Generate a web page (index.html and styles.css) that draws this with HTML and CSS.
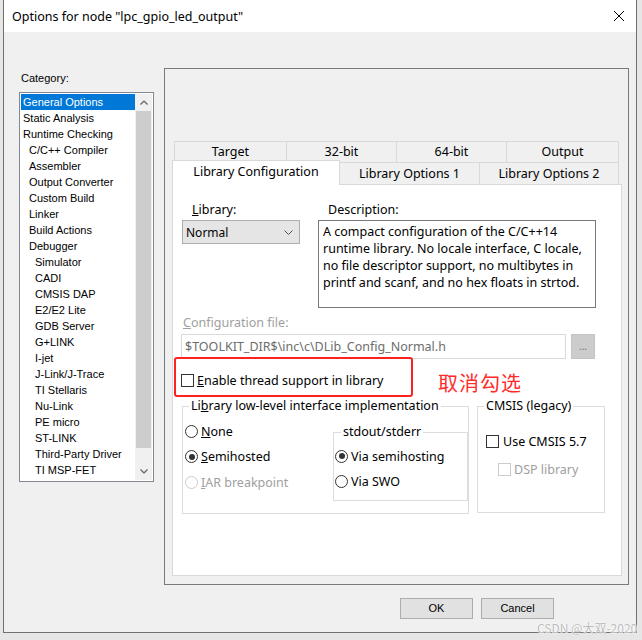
FILE: index.html
```html
<!DOCTYPE html>
<html>
<head>
    <meta charset="UTF-8" />
    <title>Options for node</title>
    <link rel="stylesheet" href="styles.css">
</head>
<body>
<div class="window">
    <div class="titlebar">
        <span class="title">Options for node "lpc_gpio_led_output"</span>
        <svg class="close" width="12" height="12" viewBox="0 0 12 12"><path d="M1 1L11 11M11 1L1 11" stroke="#000" stroke-width="1" fill="none"/></svg>
    </div>

    <div class="main">
        <div class="side">
            <div class="cat-label">Category:</div>
            <div class="listbox">
                <ul class="items">
                    <li class="sel">General Options</li>
                    <li>Static Analysis</li>
                    <li>Runtime Checking</li>
                    <li class="sub">C/C++ Compiler</li>
                    <li class="sub">Assembler</li>
                    <li class="sub">Output Converter</li>
                    <li class="sub">Custom Build</li>
                    <li class="sub">Linker</li>
                    <li class="sub">Build Actions</li>
                    <li class="sub">Debugger</li>
                    <li class="sub2">Simulator</li>
                    <li class="sub2">CADI</li>
                    <li class="sub2">CMSIS DAP</li>
                    <li class="sub2">E2/E2 Lite</li>
                    <li class="sub2">GDB Server</li>
                    <li class="sub2">G+LINK</li>
                    <li class="sub2">I-jet</li>
                    <li class="sub2">J-Link/J-Trace</li>
                    <li class="sub2">TI Stellaris</li>
                    <li class="sub2">Nu-Link</li>
                    <li class="sub2">PE micro</li>
                    <li class="sub2">ST-LINK</li>
                    <li class="sub2">Third-Party Driver</li>
                    <li class="sub2">TI MSP-FET</li>
                </ul>
                <div class="scrollbar">
                    <div class="arrow"><svg width="8" height="5" viewBox="0 0 8 5"><path d="M0.5 4.5L4 1L7.5 4.5" stroke="#606060" stroke-width="1.2" fill="none"/></svg></div>
                    <div class="track"><div class="thumb"></div></div>
                    <div class="arrow"><svg width="8" height="5" viewBox="0 0 8 5"><path d="M0.5 0.5L4 4L7.5 0.5" stroke="#606060" stroke-width="1.2" fill="none"/></svg></div>
                </div>
            </div>
        </div>

        <div class="frame">
            <div class="tabrow back">
                <div class="tab w112">Target</div>
                <div class="tab w110">32-bit</div>
                <div class="tab w110">64-bit</div>
                <div class="tab w113 last">Output</div>
            </div>
            <div class="tabrow front">
                <div class="tab active">Library Configuration</div>
                <div class="tab opt1">Library Options 1</div>
                <div class="tab opt2 last">Library Options 2</div>
            </div>

            <div class="panel">
                <div class="top-row">
                    <div class="lib-col">
                        <div class="label"><u>L</u>ibrary:</div>
                        <div class="select">
                            <span>Normal</span>
                            <svg width="9" height="5" viewBox="0 0 9 5"><path d="M0.5 0.5L4.5 4.5L8.5 0.5" stroke="#555" stroke-width="1" fill="none"/></svg>
                        </div>
                    </div>
                    <div class="desc-col">
                        <div class="label">Description:</div>
                        <div class="desc">A compact configuration of the C/C++14 runtime library. No locale interface, C locale, no file descriptor support, no multibytes in printf and scanf, and no hex floats in strtod.</div>
                    </div>
                </div>

                <div class="cfg-label"><u>C</u>onfiguration file:</div>
                <div class="cfg-row">
                    <div class="cfg-input">$TOOLKIT_DIR$\inc\c\DLib_Config_Normal.h</div>
                    <div class="cfg-btn">...</div>
                </div>

                <div class="check-row">
                    <span class="box"></span>
                    <span><u>E</u>nable thread support in library</span>
                </div>

                <div class="groups">
                    <fieldset class="group g1">
                        <legend>Li<u>b</u>rary low-level interface implementation</legend>
                        <div class="g1-body">
                            <div class="radios">
                                <div class="radio-row"><span class="radio"></span><span><u>N</u>one</span></div>
                                <div class="radio-row"><span class="radio on"></span><span><u>S</u>emihosted</span></div>
                                <div class="radio-row off"><span class="radio"></span><span><u>I</u>AR breakpoint</span></div>
                            </div>
                            <fieldset class="group g-inner">
                                <legend>stdout/stderr</legend>
                                <div class="radio-row"><span class="radio on"></span><span>Via semihosting</span></div>
                                <div class="radio-row"><span class="radio"></span><span>Via SWO</span></div>
                            </fieldset>
                        </div>
                    </fieldset>
                    <fieldset class="group g2">
                        <legend>CMSIS (legacy)</legend>
                        <div class="check-row cmsis"><span class="box"></span><span>Use CMSIS 5.7</span></div>
                        <div class="check-row dsp off"><span class="box"></span><span>DSP library</span></div>
                    </fieldset>
                </div>

                <!-- 标注 -->
                <div class="mark-box"></div>
                <div class="mark-text">取消勾选</div>
            </div>
        </div>
    </div>

    <div class="buttons">
        <div class="btn">OK</div>
        <div class="btn">Cancel</div>
    </div>
</div>
<div class="watermark">CSDN @大双-2020</div>
</body>
</html>
```

FILE: styles.css
```css
* {
    margin: 0;
    padding: 0;
    box-sizing: border-box;
}
body {
    width: 642px;
    height: 640px;
    overflow: hidden;
    position: relative;
    background-color: #e6e6e6;
    font-family: "Noto Sans", "Liberation Sans", sans-serif;
    font-size: 12.5px;
    color: #000;
}
u {
    text-decoration: underline;
    text-underline-offset: 1px;
}

.window {
    width: 634px;
    height: 633px;
    margin-left: 3px;
    background-color: #f0f0f0;
    border: 1px solid #707070;
    border-top: none;
}
.titlebar {
    height: 32px;
    background-color: #fff;
    display: flex;
    align-items: center;
    justify-content: space-between;
    padding: 0 11px 0 8px;
}

.main {
    display: flex;
    padding-top: 36px;
}
.side {
    width: 160px;
    padding-left: 15px;
}
.cat-label {
    font: 11px/14px "Liberation Sans", sans-serif;
    margin: 3px 0 7px 2px;
}
.listbox {
    width: 135px;
    height: 390px;
    border: 1px solid #828790;
    background-color: #fff;
    padding: 1px;
    display: flex;
}
.items {
    list-style: none;
    width: 114px;
    font: 11px/16px "Liberation Sans", sans-serif;
}
.items li {
    height: 16px;
    padding-left: 2px;
    white-space: nowrap;
}
.items li.sub {
    padding-left: 8px;
}
.items li.sub2 {
    padding-left: 14px;
}
.items li.sel {
    background-color: #0078d7;
    color: #fff;
}
.scrollbar {
    width: 17px;
    display: flex;
    flex-direction: column;
    background-color: #f0f0f0;
}
.arrow {
    height: 17px;
    display: flex;
    align-items: center;
    justify-content: center;
}
.track {
    flex: 1;
    padding: 0 1px;
}
.thumb {
    height: 337px;
    background-color: #cdcdcd;
}

/* 右侧大框 */
.frame {
    width: 465px;
    height: 517px;
    border: 1px solid #7a7a7a;
    padding: 72px 0 0 7px;
}
.tabrow {
    display: flex;
}
.tabrow.back {
    margin-left: 2px;
}
.tabrow.front {
    height: 22px;
    align-items: flex-end;
}
.tab {
    height: 21px;
    border: 1px solid #d9d9d9;
    border-right: none;
    border-bottom: none;
    background-color: #f0f0f0;
    text-align: center;
    line-height: 20px;
    white-space: nowrap;
}
.tab.last {
    border-right: 1px solid #d9d9d9;
}
.w112 { width: 112px; }
.w110 { width: 110px; }
.w113 { width: 113px; }
.tabrow.front .tab {
    height: 22px;
    line-height: 21px;
}
.tab.active {
    width: 168px;
    height: 25px !important;
    margin-bottom: -1px;
    border-right: 1px solid #d9d9d9;
    background-color: #fff;
    position: relative;
    z-index: 1;
    line-height: 21px !important;
}
.tab.opt1 {
    width: 139px;
    border-left: none;
}
.tab.opt2 {
    width: 140px;
}

.panel {
    width: 450px;
    height: 392px;
    border: 1px solid #d9d9d9;
    background-color: #fff;
    position: relative;
    padding: 17px 0 0 9px;
}
.top-row {
    display: flex;
}
.lib-col {
    width: 118px;
}
.desc-col {
    width: 278px;
    margin-left: 18px;
}
.label {
    line-height: 16px;
    padding-left: 10px;
    margin-bottom: 2px;
}
.select {
    height: 24px;
    border: 1px solid #adadad;
    background-color: #e5e5e5;
    display: flex;
    align-items: center;
    justify-content: space-between;
    padding: 0 6px 0 3px;
    font-size: 12px;
}
.desc {
    height: 88px;
    border: 1px solid #7a7a7a;
    padding: 2px 4px;
    line-height: 17px;
}

.cfg-label {
    color: #a0a0a0;
    line-height: 16px;
    margin: 7px 0 3px 1px;
}
.cfg-row {
    display: flex;
    gap: 5px;
    margin-left: -1px;
}
.cfg-input {
    width: 385px;
    height: 25px;
    border: 1px solid #d9d9d9;
    background-color: #fff;
    color: #6d6d6d;
    padding-left: 3px;
    line-height: 23px;
}
.cfg-btn {
    width: 24px;
    height: 25px;
    background-color: #cccccc;
    border: 1px solid #c4c4c4;
    color: #777;
    text-align: center;
    line-height: 22px;
    font-size: 10px;
}

.check-row {
    display: flex;
    align-items: center;
    height: 16px;
    gap: 3px;
    margin: 13px 0 0 -1px;
}
.box {
    width: 13px;
    height: 13px;
    border: 1px solid #333;
    background-color: #fff;
}
.off {
    color: #a0a0a0;
}
.off .box, .off .radio {
    border-color: #cccccc;
}

.groups {
    display: flex;
    gap: 8px;
    margin-top: 10px;
    align-items: flex-start;
}
.group {
    border: 1px solid #dcdcdc;
    min-width: 0;
}
.group legend {
    margin-left: 6px;
    padding: 0 2px;
    line-height: 16px;
}
.g1 {
    width: 287px;
    height: 116px;
}
.g2 {
    width: 128px;
    height: 115px;
}
.g1-body {
    display: flex;
    padding-left: 2px;
}
.radios {
    width: 148px;
    padding-top: 9px;
}
.radio-row {
    display: flex;
    align-items: center;
    height: 16px;
    gap: 3px;
    margin-bottom: 9.5px;
}
.radio {
    width: 13px;
    height: 13px;
    border: 1px solid #333;
    border-radius: 50%;
    background-color: #fff;
    position: relative;
}
.radio.on::after {
    content: "";
    position: absolute;
    left: 2.5px;
    top: 2.5px;
    width: 6px;
    height: 6px;
    border-radius: 50%;
    background-color: #333;
}
.g-inner {
    width: 135px;
    height: 77px;
    margin-top: 10px;
    padding: 8px 0 0 1px;
}
.g-inner .radio-row {
    margin-bottom: 9px;
}
.check-row.cmsis {
    margin: 19px 0 0 8px;
    gap: 4px;
}
.check-row.dsp {
    margin: 12px 0 0 20px;
    gap: 3px;
}

/* 红色标注 */
.mark-box {
    position: absolute;
    left: 1px;
    top: 172px;
    width: 239px;
    height: 40px;
    border: 2px solid #ff2020;
    border-radius: 3px;
}
.mark-text {
    position: absolute;
    left: 265px;
    top: 186px;
    font: 20px/24px "Noto Sans CJK SC", sans-serif;
    letter-spacing: 1px;
    color: #ff2b2b;
}

.buttons {
    display: flex;
    gap: 8px;
    margin: 13px 0 0 396px;
}
.btn {
    width: 73px;
    height: 21px;
    border: 1px solid #adadad;
    background-color: #e1e1e1;
    font: 11px/19px "Liberation Sans", sans-serif;
    text-align: center;
}

.watermark {
    position: absolute;
    left: 537px;
    top: 620px;
    font: 12px/16px "Noto Sans CJK SC", sans-serif;
    color: #bdbdbd;
    text-shadow: 0 0 2px #fff, 0 0 1px #fff;
}
```
